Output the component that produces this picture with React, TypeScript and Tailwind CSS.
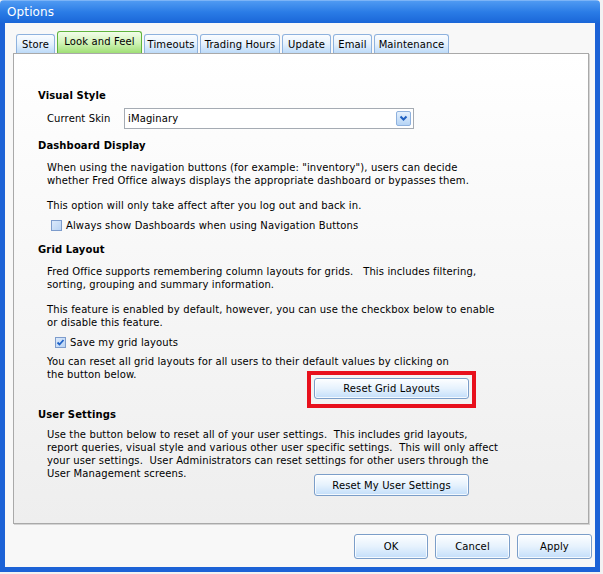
import React from "react";

const tabs = [
  { label: "Store", w: "w-[39px]" },
  { label: "Look and Feel", w: "w-[85px]", active: true },
  { label: "Timeouts", w: "w-[54px]" },
  { label: "Trading Hours", w: "w-[80px]" },
  { label: "Update", w: "w-[49px]" },
  { label: "Email", w: "w-[39px]" },
  { label: "Maintenance", w: "w-[75px]" },
];

function XpButton({ label, className = "" }: { label: string; className?: string }) {
  return (
    <div
      className={`flex items-center justify-center rounded-[3px] border border-[#7b9ec9] bg-gradient-to-b from-[#fdfeff] via-[#e6f2fd] to-[#c3defa] text-black shadow-[inset_0_0_0_1px_rgba(255,255,255,0.8)] ${className}`}
    >
      {label}
    </div>
  );
}

function Checkbox({ checked = false }: { checked?: boolean }) {
  return (
    <div className="w-[11px] h-[11px] border border-[#7d9ccc] bg-gradient-to-br from-[#dbe9fb] to-[#b9d3f3] flex items-center justify-center">
      {checked && (
        <svg width="9" height="9" viewBox="0 0 9 9">
          <polyline points="1.5,4.5 3.5,6.5 7.5,2" fill="none" stroke="#2063c8" strokeWidth="1.8" />
        </svg>
      )}
    </div>
  );
}

export default function App() {
  return (
    <div
      className="w-[603px] h-[574px] bg-[#f2f2f2] text-black text-[10px] leading-[13px] tracking-[0.12px]"
      style={{ fontFamily: "Tahoma, 'DejaVu Sans', sans-serif" }}
    >
      <div className="w-[600px] h-[572px] flex flex-col rounded-t-[4px] overflow-hidden">
        {/* title bar */}
        <div className="h-[23px] flex items-center px-[7px] bg-gradient-to-b from-[#4f9af2] via-[#2a7ce6] to-[#1a66d8] text-white text-[12px] border-t border-[#7cb4f7]">
          Options
        </div>

        {/* client area */}
        <div className="flex-1 flex flex-col bg-[#f8f8f8] border-x-[5px] border-b-[5px] border-[#1c62d6] pt-[7px] pl-[8px] pr-[3px]">
          {/* tab strip */}
          <div className="flex items-end gap-[2px] pl-[3px] h-[23px]">
            {tabs.map((t) =>
              t.active ? (
                <div
                  key={t.label}
                  className={`${t.w} h-[22px] pb-[2px] flex items-center justify-center rounded-t-[3px] border border-b-0 border-[#5fb43c] bg-gradient-to-b from-[#f2fde9] via-[#d2f4b8] to-[#9fdf75]`}
                >
                  {t.label}
                </div>
              ) : (
                <div
                  key={t.label}
                  className={`${t.w} h-[19px] flex items-center justify-center rounded-t-[3px] border border-b-0 border-[#8eb2de] bg-gradient-to-b from-[#fbfdff] via-[#e5f1fd] to-[#bcdaf8]`}
                >
                  {t.label}
                </div>
              )
            )}
          </div>

          {/* panel */}
          <div className="w-[576px] h-[471px] border border-[#a9a9a9] bg-gradient-to-b from-[#ffffff] to-[#eeeeee] shadow-[1px_1px_0_#d4d4d4] pl-[24px] pt-[35px]">
            <div className="font-bold">Visual Style</div>
            <div className="flex items-center mt-[6px] pl-[9px]">
              <div className="w-[77px]">Current Skin</div>
              <div className="w-[290px] h-[21px] border border-[#a5abb3] bg-white flex items-center justify-between pl-[3px] pr-[2px]">
                <span>iMaginary</span>
                <div className="w-[15px] h-[15px] rounded-[2px] border border-[#8eb1de] bg-gradient-to-b from-[#e4f0fd] to-[#b6d4f5] flex items-center justify-center">
                  <svg width="9" height="7" viewBox="0 0 9 7">
                    <polyline points="1.5,1.5 4.5,4.5 7.5,1.5" fill="none" stroke="#1f5fbf" strokeWidth="2" />
                  </svg>
                </div>
              </div>
            </div>

            <div className="font-bold mt-[10px]">Dashboard Display</div>
            <div className="pl-[9px] mt-[9px]">
              <div>When using the navigation buttons (for example: "inventory"), users can decide</div>
              <div>whether Fred Office always displays the appropriate dashboard or bypasses them.</div>
              <div className="mt-[12px]">This option will only take affect after you log out and back in.</div>
            </div>
            <div className="flex items-center gap-[4px] pl-[13px] mt-[7px]">
              <Checkbox />
              <span>Always show Dashboards when using Navigation Buttons</span>
            </div>

            <div className="font-bold mt-[11px]">Grid Layout</div>
            <div className="pl-[9px] mt-[9px]">
              <div>Fred Office supports remembering column layouts for grids.&nbsp;&nbsp; This includes filtering,</div>
              <div>sorting, grouping and summary information.</div>
              <div className="mt-[12px]">This feature is enabled by default, however, you can use the checkbox below to enable</div>
              <div>or disable this feature.</div>
            </div>
            <div className="flex items-center gap-[4px] pl-[17px] mt-[7px]">
              <Checkbox checked />
              <span>Save my grid layouts</span>
            </div>
            <div className="pl-[9px] mt-[6px]">
              <div>You can reset all grid layouts for all users to their default values by clicking on</div>
              <div>the button below.</div>
            </div>
            <div className="ml-[269px] -mt-[10px] w-[169px] h-[37px] border-[4px] border-[#e8101c] p-[3px]">
              <XpButton label="Reset Grid Layouts" className="h-[21px] w-[155px]" />
            </div>

            <div className="font-bold mt-[0px]">User Settings</div>
            <div className="pl-[9px] mt-[7px]">
              <div>Use the button below to reset all of your user settings.&nbsp; This includes grid layouts,</div>
              <div>report queries, visual style and various other user specific settings.&nbsp; This will only affect</div>
              <div>your user settings.&nbsp; User Administrators can reset settings for other users through the</div>
              <div>User Management screens.</div>
            </div>
            <XpButton label="Reset My User Settings" className="ml-[276px] -mt-[6px] h-[22px] w-[155px]" />
          </div>

          {/* footer */}
          <div className="flex justify-end gap-[7px] mt-[10px]">
            <XpButton label="OK" className="w-[74px] h-[25px]" />
            <XpButton label="Cancel" className="w-[75px] h-[25px]" />
            <XpButton label="Apply" className="w-[75px] h-[25px]" />
          </div>
        </div>
      </div>
    </div>
  );
}
